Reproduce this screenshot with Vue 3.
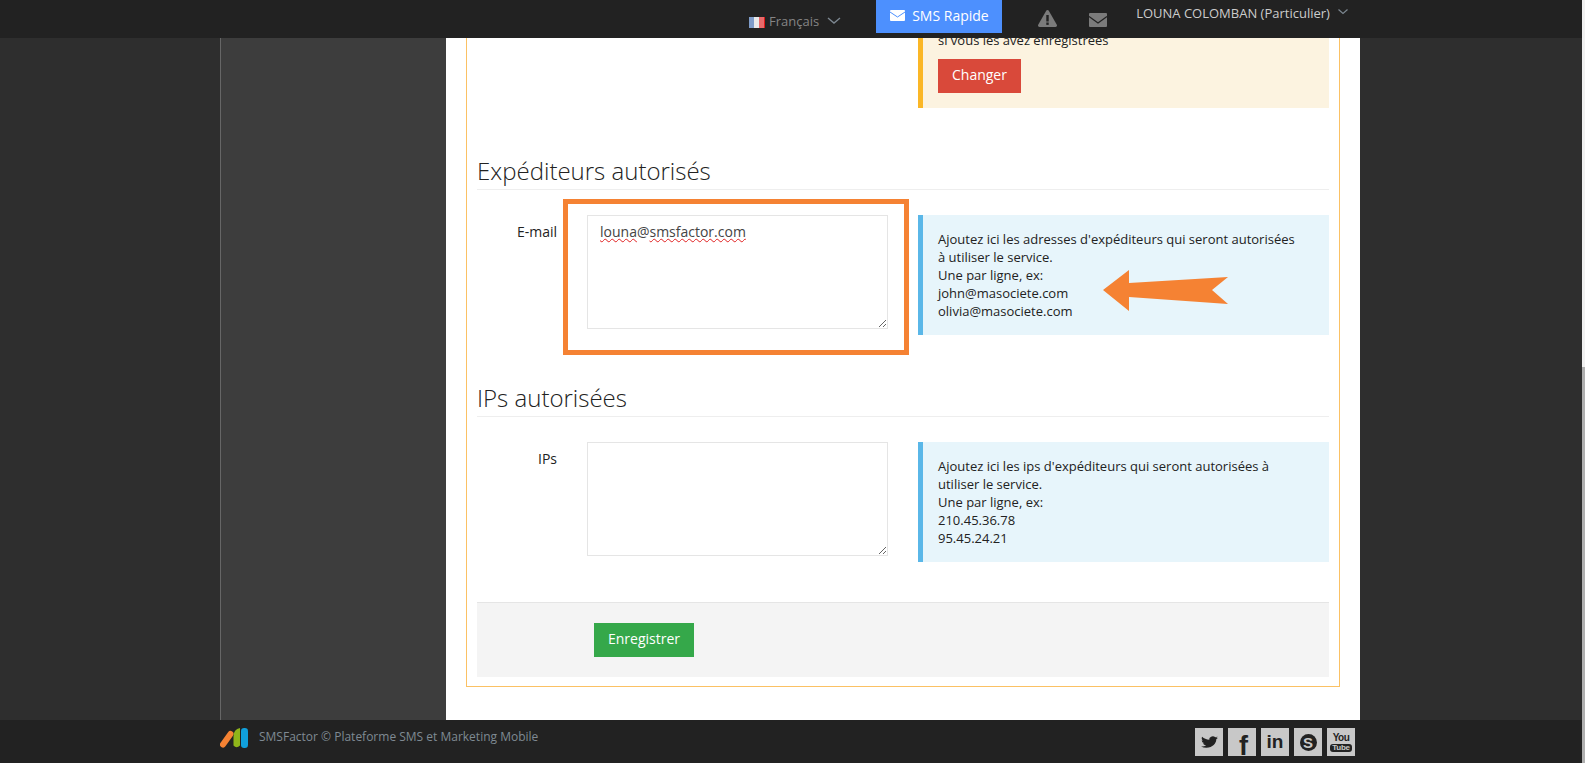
<script setup>
import { ref } from 'vue';

const senders = ref('louna@smsfactor.com');
const ips = ref('');
</script>

<template>
    <div class="page">
        <div class="window">
            <header class="topbar">
                <div class="lang">
                    <svg class="flag" width="16" height="11" viewBox="0 0 16 11">
                        <rect width="6" height="11" fill="#7f9cc9" />
                        <rect x="5" width="6" height="11" fill="#e9e9e9" />
                        <rect x="10" width="6" height="11" fill="#e86a6a" />
                        <rect x="15" width="1" height="11" fill="#e01818" />
                    </svg>
                    <span>Français</span>
                    <svg class="chev" width="14" height="7" viewBox="0 0 14 7">
                        <path d="M1 1l6 5 6-5" fill="none" stroke="#7c8790" stroke-width="1.4" />
                    </svg>
                </div>
                <a class="quick">
                    <svg width="15" height="11" viewBox="0 0 15 11">
                        <rect width="15" height="11" rx="1" fill="#fff" />
                        <path d="M0 2l7.5 5L15 2" fill="none" stroke="#4d90fe" stroke-width="1" />
                    </svg>
                    SMS Rapide
                </a>
                <svg class="alert" width="19" height="17" viewBox="0 0 19 17">
                    <path d="M9.5 0c.6 0 1 .3 1.3.8l8 14c.5 1-.1 2.2-1.3 2.2h-16C.3 17-.3 15.8.2 14.8l8-14C8.5.3 8.9 0 9.5 0z" fill="#7b7b7b" />
                    <rect x="8.3" y="5" width="2.4" height="6.5" fill="#222" />
                    <rect x="8.3" y="12.5" width="2.4" height="2.4" fill="#222" />
                </svg>
                <svg class="mail" width="18" height="14" viewBox="0 0 18 14">
                    <rect width="18" height="14" rx="1" fill="#7b7b7b" />
                    <path d="M0 3.5l9 6.5 9-6.5" fill="none" stroke="#222" stroke-width="1.3" />
                </svg>
                <div class="account">LOUNA COLOMBAN (Particulier)</div>
                <svg class="chev-user" width="10" height="6" viewBox="0 0 10 6">
                    <path d="M.5.5l4.500 4 4.500-4" fill="none" stroke="#7c8790" stroke-width="1.2" />
                </svg>
            </header>

            <div class="middle">
                <div class="rail"></div>
                <aside class="sidebar"></aside>
                <main class="content">
                    <div class="panel">
                        <div class="form-row first">
                            <div></div>
                            <div></div>
                            <div class="note warn">
                                <p class="clipped">si vous les avez enregistrées</p>
                                <button class="btn btn-red">Changer</button>
                            </div>
                        </div>

                        <h3>Expéditeurs autorisés</h3>
                        <div class="form-row">
                            <label>E-mail</label>
                            <div class="field">
                                <textarea v-model="senders" spellcheck="false"></textarea>
                                <div class="squiggles"><span>louna</span>@<span>smsfactor.com</span></div>
                                <div class="mark-box"></div>
                            </div>
                            <div class="note info">
                                Ajoutez ici les adresses d'expéditeurs qui seront autorisées<br>
                                à utiliser le service.<br>
                                Une par ligne, ex:<br>
                                john@masociete.com<br>
                                olivia@masociete.com
                                <svg class="mark-arrow" width="126" height="42" viewBox="0 0 126 42">
                                    <polygon points="0,20 26,0 26,13 125,7 109,20 125,34 26,27 26,41" fill="#f58233" />
                                </svg>
                            </div>
                        </div>

                        <h3>IPs autorisées</h3>
                        <div class="form-row">
                            <label>IPs</label>
                            <div class="field">
                                <textarea v-model="ips" spellcheck="false"></textarea>
                            </div>
                            <div class="note info">
                                Ajoutez ici les ips d'expéditeurs qui seront autorisées à<br>
                                utiliser le service.<br>
                                Une par ligne, ex:<br>
                                210.45.36.78<br>
                                95.45.24.21
                            </div>
                        </div>

                        <div class="actions">
                            <button class="btn btn-green">Enregistrer</button>
                        </div>
                    </div>
                </main>
                <div class="rail"></div>
            </div>

            <footer class="bottombar">
                <div class="brand">
                    <svg width="28" height="20" viewBox="0 0 28 20">
                        <path d="M3 16.500L10.500 6" stroke="#f58233" stroke-width="6" stroke-linecap="round" />
                        <path d="M13.500 17.500V8.500Q13.500 1 20 0V17.500Q16.500 21 13.500 17.500z" fill="#8fb51a" />
                        <rect x="21" width="7" height="20" rx="3.200" fill="#10a0dc" />
                    </svg>
                    <span>SMSFactor © Plateforme SMS et Marketing Mobile</span>
                </div>
                <div class="social">
                    <a class="tile">
                        <svg width="17" height="14" viewBox="0 0 24 24" preserveAspectRatio="none">
                            <path d="M23.953 4.57a10 10 0 01-2.825.775 4.958 4.958 0 002.163-2.723c-.951.555-2.005.959-3.127 1.184a4.92 4.92 0 00-8.384 4.482C7.69 8.095 4.067 6.13 1.64 3.162a4.822 4.822 0 00-.666 2.475c0 1.71.87 3.213 2.188 4.096a4.904 4.904 0 01-2.228-.616v.06a4.923 4.923 0 003.946 4.827 4.996 4.996 0 01-2.212.085 4.936 4.936 0 004.604 3.417 9.867 9.867 0 01-6.102 2.105c-.39 0-.779-.023-1.17-.067a13.995 13.995 0 007.557 2.209c9.053 0 13.998-7.496 13.998-13.985 0-.21 0-.42-.015-.63A9.935 9.935 0 0024 4.59z" fill="#222" />
                        </svg>
                    </a>
                    <a class="tile tile-f">f</a>
                    <a class="tile tile-in">in</a>
                    <a class="tile"><span class="skype">S</span></a>
                    <a class="tile tile-yt"><span class="you">You</span><span class="tube">Tube</span></a>
                </div>
            </footer>
        </div>
        <div class="scrollbar"><div class="thumb"></div></div>
    </div>
</template>

<style>
html, body { margin: 0; height: 100%; overflow: hidden; background: #2e2e2e; }
</style>

<style scoped>
.page {
    display: flex;
    height: 763px;
    font-family: "Open Sans", "Liberation Sans", sans-serif;
    font-size: 13px;
    color: #333;
}
.window { width: 1582px; display: flex; flex-direction: column; }
.scrollbar { flex: 1; background: #f1f1f1; padding-top: 367px; display: flex; }
.thumb { flex: 1; background: #b0b0b0; }

/* barre du haut */
.topbar {
    height: 38px;
    flex: none;
    background: #222;
    display: flex;
    align-items: flex-start;
    padding-left: 749px;
    color: #ccc;
}
.lang { display: flex; align-items: center; margin-top: 11px; color: #858585; height: 20px; }
.flag { margin-right: 4px; margin-top: 2px; }
.chev { margin-left: 8px; margin-top: -1px; }
.quick {
    margin-left: 35px;
    width: 126px;
    height: 33px;
    box-sizing: border-box;
    padding: 0 0 2px 14px;
    background: #4d90fe;
    color: #fff;
    font-size: 14px;
    display: flex;
    align-items: center;
    gap: 7px;
}
.alert { margin: 10px 0 0 36px; }
.mail { margin: 13px 0 0 32px; }
.account { margin: 3px 0 0 29px; line-height: 20px; white-space: nowrap; }
.chev-user { margin: 9px 0 0 8px; }

.middle { flex: 1; display: flex; overflow: hidden; }
.rail { width: 220px; background: #2e2e2e; flex: none; }
.rail:last-child { width: 222px; }
.sidebar { width: 225px; flex: none; background: #3d3d3d; border-left: 1px solid #666; }
.content { width: 914px; flex: none; background: #fff; padding: 0 20px; box-sizing: border-box; }
.panel {
    border: 1px solid #fbc164;
    border-top: none;
    padding: 0 10px 9px;
}

.form-row {
    display: grid;
    grid-template-columns: 80px 301px 411px;
    column-gap: 30px;
    align-items: start;
}
h3 {
    margin: 46px 0 25px;
    height: 35px;
    line-height: 33px;
    font-size: 24px;
    font-weight: 300;
    border-bottom: 1px solid #eee;
    color: #222;
}
label { text-align: right; font-size: 14px; line-height: 20px; padding-top: 7px; color: #222; }
.field { position: relative; height: 114px; }
textarea {
    display: block;
    width: 301px;
    height: 114px;
    box-sizing: border-box;
    border: 1px solid #e5e5e5;
    padding: 6px 12px;
    margin: 0;
    font-family: inherit;
    font-size: 14px;
    line-height: 20px;
    color: #444;
    outline: none;
}
/* soulignement du correcteur pose sur le texte du textarea */
.squiggles {
    position: absolute;
    left: 13px;
    top: 7px;
    font-size: 14px;
    line-height: 20px;
    color: transparent;
    pointer-events: none;
}
.squiggles span { text-decoration: underline wavy #e02020 0.6px; text-underline-offset: 1px; }
.mark-box {
    position: absolute;
    left: -24px;
    top: -16px;
    width: 346px;
    height: 156px;
    box-sizing: border-box;
    border: 5px solid #f58233;
    pointer-events: none;
}

.note { padding: 15px; line-height: 18px; color: #222; box-sizing: border-box; position: relative; }
.info { background: #e7f5fb; border-left: 5px solid #5ab7e8; }
.warn { background: #fcf3e0; border-left: 5px solid #fbb726; padding-top: 0; }
.clipped { margin: -7px 0 10px; }
.mark-arrow { position: absolute; left: 180px; top: 55px; }

.btn {
    display: block;
    height: 34px;
    border: none;
    border-radius: 0;
    color: #fff;
    font-family: inherit;
    font-size: 14px;
    padding: 0 14px 3px;
}
.btn-red { background: #d9493a; }
.btn-green { background: #35a84a; }
.actions {
    margin-top: 40px;
    border-top: 1px solid #e5e5e5;
    background: #f4f4f4;
    padding: 20px 0 20px 117px;
}

/* pied de page */
.bottombar {
    height: 43px;
    flex: none;
    background: #222;
    display: flex;
    justify-content: space-between;
    align-items: flex-start;
    padding: 0 227px 0 220px;
}
.brand { display: flex; align-items: flex-start; gap: 11px; margin-top: 8px; color: #7f8a93; font-size: 12px; line-height: 18px; }
.social { display: flex; gap: 5px; margin-top: 8px; }
.tile {
    width: 28px;
    height: 28px;
    background: #c8c8c8;
    color: #222;
    display: flex;
    align-items: center;
    justify-content: center;
    overflow: hidden;
    font-family: "Liberation Sans", sans-serif;
    font-weight: bold;
}
.tile-f {
    font-size: 27px;
    line-height: 20px;
    align-items: flex-start;
    justify-content: flex-start;
    padding: 8px 0 0 11px;
    box-sizing: border-box;
}
.tile-in { font-size: 19px; }
.skype {
    width: 17px;
    height: 17px;
    border-radius: 50%;
    background: #222;
    color: #c8c8c8;
    font-size: 15px;
    line-height: 17px;
    text-align: center;
}
.tile-yt { flex-direction: column; line-height: 1; }
.you { font-size: 10px; letter-spacing: -0.5px; }
.tube { background: #222; color: #c8c8c8; font-size: 8px; padding: 0 2px; border-radius: 3px; margin-top: 1px; letter-spacing: -0.3px; }
</style>
